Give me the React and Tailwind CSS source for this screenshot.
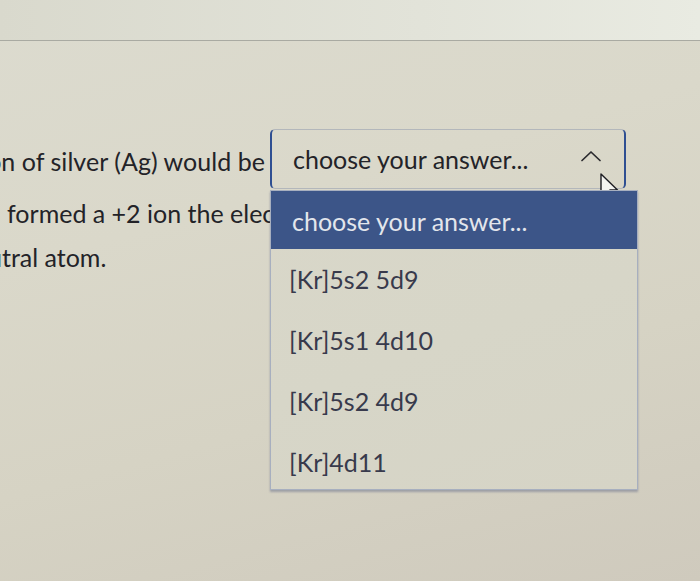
// Question de chimie avec menu déroulant ouvert : texte de l'énoncé,
// sélecteur focalisé (chevron vers le haut) et liste des réponses.
const OPTIONS = ['[Kr]5s2 5d9', '[Kr]5s1 4d10', '[Kr]5s2 4d9', '[Kr]4d11'];

function ChevronUp() {
  return (
    <svg width="22" height="12" viewBox="0 0 22 12" fill="none">
      <path d="M2 10.5 L11 2 L20 10.5" stroke="#2a2a2e" strokeWidth="1.7" strokeLinecap="round" strokeLinejoin="round" />
    </svg>
  );
}

function Curseur() {
  return (
    <svg width="26" height="32" viewBox="0 0 26 32" fill="none">
      <path
        d="M2 2 L2 24 L7.5 19 L11.5 28.5 L15 27 L11 18 L18.5 18 Z"
        fill="#f4f4f0"
        stroke="#1d1d22"
        strokeWidth="1.4"
        strokeLinejoin="round"
      />
    </svg>
  );
}

export default function App() {
  return (
    <div
      className="relative h-[581px] w-[700px] overflow-hidden bg-[linear-gradient(165deg,#dcdbcf_0%,#dad8ca_35%,#d6d3c4_65%,#cfcabd_100%)] text-[25px] text-[#232328]"
      style={{ fontFamily: 'Lato, "Open Sans", sans-serif' }}
    >
      {/* bandeau supérieur plus clair */}
      <div className="h-[41px] border-b border-[#a9aaa2] bg-[linear-gradient(90deg,#d9d9cd_0%,#e2e3d9_60%,#e9ebe2_100%)]" />

      <div className="pt-[88px]">
        {/* ligne 1 : fin de phrase + sélecteur */}
        <div className="flex h-[60px] items-center">
          <div className="flex w-[268px] justify-end overflow-hidden whitespace-nowrap pr-[3px] pt-[6px]">
            <span className="tracking-[0.04px]">on of silver (Ag) would be</span>
          </div>
          <div className="relative ml-[2px] flex h-[60px] w-[356px] items-center rounded-[5px] border-x-[2px] border-y border-x-[#2f4f92] border-y-[#b3b7bb] pl-[21px] pr-[22px]">
            <span className="flex-1 pt-[2px]">choose your answer...</span>
            <span className="mt-[-6px]">
              <ChevronUp />
            </span>
            <div className="absolute left-[327px] top-[42px]">
              <Curseur />
            </div>
          </div>
        </div>

        {/* lignes 2 et 3, à gauche de la liste */}
        <div className="w-[270px] overflow-hidden pt-[2px] leading-[44px] whitespace-nowrap">
          <div className="pl-[7px]">formed a +2 ion the elec</div>
          <div className="ml-[-12px]">utral atom.</div>
        </div>
      </div>

      {/* liste déroulante ouverte */}
      <div className="absolute left-[270px] top-[190px] h-[300px] w-[368px] overflow-hidden border border-[#a7afbf] bg-[linear-gradient(160deg,#d9d7c9_0%,#d7d6c8_50%,#d6d4c6_100%)] shadow-[0_2px_2px_rgba(90,100,130,0.45)]">
        <div className="flex h-[58px] items-center bg-[#3c5588] pl-[21px] pt-[4px] text-[#e3e6ec]">choose your answer...</div>
        {OPTIONS.map((o) => (
          <div key={o} className="flex h-[61px] items-center pl-[18px] text-[#383a4c]">
            {o}
          </div>
        ))}
      </div>
    </div>
  );
}
